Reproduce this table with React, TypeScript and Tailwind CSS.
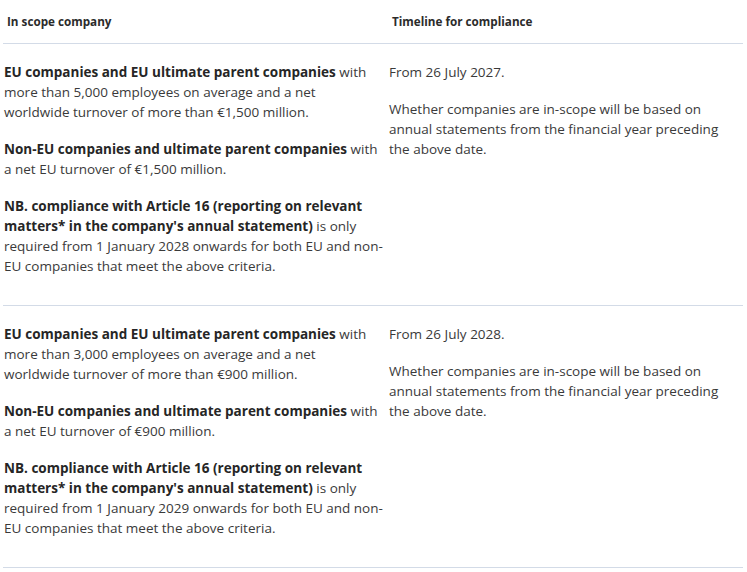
import React from "react";

const B = ({ children }: { children: React.ReactNode }) => (
  <strong className="font-bold text-[#262626]">{children}</strong>
);

type Row = { year1: string; emp: string; turn: string; eu: string; year2: string };

const rows: Row[] = [
  { emp: "5,000", turn: "€1,500 million", eu: "€1,500 million", year1: "2027", year2: "2028" },
  { emp: "3,000", turn: "€900 million", eu: "€900 million", year1: "2028", year2: "2029" },
];

export default function App() {
  return (
    <div
      className="bg-white w-[747px] h-[572px] pl-[3px] pt-0 text-[13.5px] leading-[20px] text-[#3a3a3a]"
      style={{ fontFamily: '"Open Sans", "Noto Sans", Arial, sans-serif' }}
    >
      <div className="w-[740px]">
        <div className="grid grid-cols-[385px_1fr] border-b border-[#d3dbe7] text-[11.7px] leading-[16px] font-bold text-[#2b2b2b]">
          <div className="pl-[4px] pt-[13px] pb-[14px]">In scope company</div>
          <div className="pl-[4px] pt-[13px] pb-[14px]">Timeline for compliance</div>
        </div>
        {rows.map((r, i) => (
          <div
            key={i}
            className="grid grid-cols-[385px_1fr] border-b border-[#d3dbe7] pt-[18px] pb-[29px]"
          >
            <div className="pl-[1px] pr-[5px] flex flex-col gap-[17px]">
              <p>
                <B>EU companies and EU ultimate parent companies</B> with more than {r.emp} employees on
                average and a net worldwide turnover of more than {r.turn}.
              </p>
              <p>
                <B>Non-EU companies and ultimate parent companies</B> with a net EU turnover of {r.eu}.
              </p>
              <p>
                <B>NB. compliance with Article 16 (reporting on relevant matters* in the company's annual statement)</B>{" "}
                is only required from 1 January {r.year2} onwards for both EU and non-EU companies that meet the above
                criteria.
              </p>
            </div>
            <div className="pl-[1px] pr-[14px] flex flex-col gap-[17px]">
              <p>From 26 July {r.year1}.</p>
              <p>
                Whether companies are in-scope will be based on annual statements from the financial year preceding the
                above date.
              </p>
            </div>
          </div>
        ))}
      </div>
    </div>
  );
}
